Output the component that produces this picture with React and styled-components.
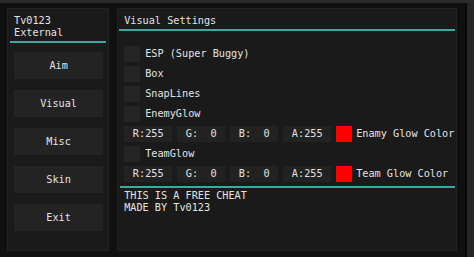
import React from "react";
import styled, { createGlobalStyle } from "styled-components";

const Global = createGlobalStyle`
  html, body { margin: 0; padding: 0; background: #0f0f0f; }
  body { font-family: "DejaVu Sans Mono", "Liberation Mono", monospace; }
`;

const Screen = styled.div`
  width: 474px;
  height: 257px;
  display: flex;
  flex-direction: column;
  background: #101010;
  overflow: hidden;
`;

const TopStrip = styled.div`
  height: 3px;
  background: #2a2a2a;
  flex: none;
`;

const Body = styled.div`
  flex: 1;
  display: flex;
  padding: 5px 0 6px 7px;
  gap: 8px;
`;

const Panel = styled.div`
  background: #1a1a1a;
  border: 1px solid #222;
  box-sizing: border-box;
  display: flex;
  flex-direction: column;
  width: ${(p) => p.$w}px;
  color: #e2e2e2;
  font-size: 10.2px;
  line-height: 12px;
`;

const SideStrip = styled.div`
  width: 7px;
  margin-left: auto;
  margin-top: -5px;
  margin-bottom: -6px;
  background: #262626;
  border-left: 2px solid #080808;
`;

const Title = styled.div`
  padding: ${(p) => p.$pad};
  white-space: pre;
`;

const Separator = styled.div`
  height: 2px;
  background: #3ca8a0;
  margin: ${(p) => p.$m};
`;

const ButtonList = styled.div`
  display: flex;
  flex-direction: column;
  gap: 11px;
  padding: 9px 5px 0 6px;
`;

const NavButton = styled.div`
  height: 27px;
  background: #232323;
  display: flex;
  align-items: center;
  justify-content: center;
`;

const Settings = styled.div`
  display: flex;
  flex-direction: column;
  gap: 4px;
  padding: 15px 0 0 6px;
`;

const Row = styled.div`
  display: flex;
  align-items: center;
  height: 16px;
  gap: 5px;
`;

const Box = styled.div`
  width: 16px;
  height: 16px;
  background: #252525;
  flex: none;
`;

const Label = styled.span`
  margin-left: ${(p) => p.$ml || 0}px;
  white-space: pre;
`;

const Field = styled.div`
  width: 48px;
  height: 16px;
  background: #222;
  display: flex;
  align-items: center;
  justify-content: center;
  white-space: pre;
`;

const Swatch = styled.div`
  width: 16px;
  height: 16px;
  background: #fe0000;
  flex: none;
`;

const Footer = styled.div`
  padding: 2px 0 0 6px;
  white-space: pre;
`;

const checks1 = ["ESP (Super Buggy)", "Box", "SnapLines", "EnemyGlow"];

function ColorRow({ label }) {
  return (
    <Row>
      <Field>R:255</Field>
      <Field>G:  0</Field>
      <Field>B:  0</Field>
      <Field>A:255</Field>
      <Swatch />
      <Label $ml={-1}>{label}</Label>
    </Row>
  );
}

export default function App() {
  return (
    <>
      <Global />
      <Screen>
        <TopStrip />
        <Body>
          <Panel $w={104}>
            <Title $pad="6px 0 0 6px">{"Tv0123\nExternal"}</Title>
            <Separator $m="2px 2px 0 2px" />
            <ButtonList>
              {["Aim", "Visual", "Misc", "Skin", "Exit"].map((b) => (
                <NavButton key={b}>{b}</NavButton>
              ))}
            </ButtonList>
          </Panel>
          <Panel $w={346}>
            <Title $pad="6px 0 0 6px">Visual Settings</Title>
            <Separator $m="2px 1px 0 1px" />
            <Settings>
              {checks1.map((c) => (
                <Row key={c}>
                  <Box />
                  <Label>{c}</Label>
                </Row>
              ))}
              <ColorRow label="Enamy Glow Color" />
              <Row>
                <Box />
                <Label>TeamGlow</Label>
              </Row>
              <ColorRow label="Team Glow Color" />
            </Settings>
            <Separator $m="4px 1px 0 2px" />
            <Footer>{"THIS IS A FREE CHEAT\nMADE BY Tv0123"}</Footer>
          </Panel>
          <SideStrip />
        </Body>
      </Screen>
    </>
  );
}
